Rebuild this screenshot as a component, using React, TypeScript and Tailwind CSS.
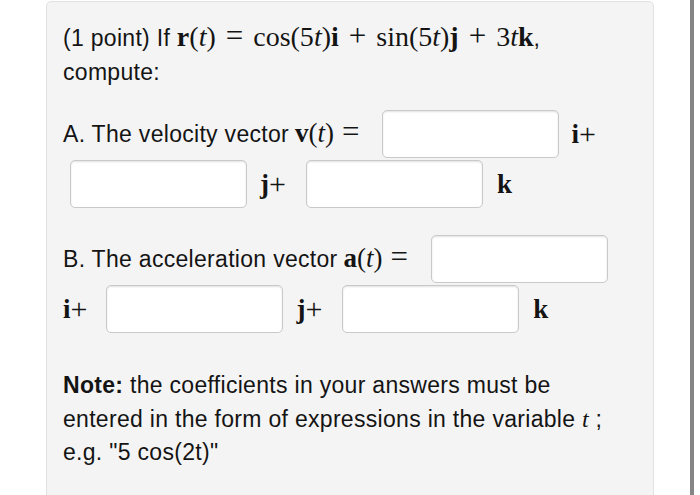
import React from "react";

const serif = "font-['Liberation_Serif',serif] tracking-normal";

type Kids = { children: React.ReactNode };

function M({ children, size = "text-[27px]" }: Kids & { size?: string }) {
  return <span className={`${serif} ${size} leading-none`}>{children}</span>;
}
const B = ({ children }: Kids) => <b className="font-bold">{children}</b>;
const I = ({ children }: Kids) => <i className="italic">{children}</i>;
// MathJax operators are wider than the Times ones, so they get a larger size
const Op = ({ children, gap = "mx-[7px]" }: Kids & { gap?: string }) => (
  <span className={`${gap} text-[31px] leading-none`}>{children}</span>
);

function Answer({ className = "" }: { className?: string }) {
  return (
    <input
      type="text"
      className={`h-[48px] w-[177px] shrink-0 rounded-[5px] border border-[#c9c9c9] bg-white shadow-[inset_0_1px_2px_rgba(0,0,0,0.12)] outline-none ${className}`}
    />
  );
}

function Unit({ v, plus = true, className = "" }: { v: string; plus?: boolean; className?: string }) {
  return (
    <span className={`${serif} flex items-center text-[27px] leading-none ${className}`}>
      <b className="font-bold">{v}</b>
      {plus && <span className="text-[30px]">+</span>}
    </span>
  );
}

export default function App() {
  return (
    <div className="flex h-[495px] w-[700px] overflow-hidden bg-white font-['Liberation_Sans',Arial,sans-serif] text-[23px] tracking-[0.3px] text-[#141414]">
      <div className="ml-[46px] mt-px min-h-[520px] w-[608px] shrink-0 rounded-t-[5px] border border-[#e1e1e1] bg-[#f4f4f4] pl-[16px] pt-[18px]">
        <p className="whitespace-nowrap leading-[34px]">
          (1 point) If{" "}
          <M size="text-[28px]">
            <B>r</B>(<I>t</I>)<Op gap="mx-[10px]">=</Op>cos(5<I>t</I>)<B>i</B>
            <Op gap="mx-[10px]">+</Op>sin(5<I>t</I>)<B>j</B>
            <Op gap="mx-[10px]">+</Op>3<I>t</I>
            <B>k</B>
          </M>
          ,
          <br />
          compute:
        </p>

        <div className="mt-[20px]">
          <div className="flex h-[50px] items-center whitespace-nowrap">
            <span>A. The velocity vector</span>
            <span className="ml-[6px]">
              <M>
                <B>v</B>(<I>t</I>)<Op gap="ml-[8px]">=</Op>
              </M>
            </span>
            <Answer className="ml-[22px]" />
            <Unit v="i" className="ml-[13px]" />
          </div>
          <div className="flex h-[50px] items-center whitespace-nowrap">
            <Answer className="ml-[7px]" />
            <Unit v="j" className="ml-[13px]" />
            <Answer className="ml-[20px]" />
            <Unit v="k" plus={false} className="ml-[14px]" />
          </div>
        </div>

        <div className="mt-[25px]">
          <div className="flex h-[50px] items-center whitespace-nowrap">
            <span>B. The acceleration vector</span>
            <span className="ml-[6px]">
              <M>
                <B>a</B>(<I>t</I>)<Op gap="ml-[8px]">=</Op>
              </M>
            </span>
            <Answer className="ml-[23px]" />
          </div>
          <div className="flex h-[50px] items-center whitespace-nowrap">
            <Unit v="i" />
            <Answer className="ml-[19px]" />
            <Unit v="j" className="ml-[13px]" />
            <Answer className="ml-[20px]" />
            <Unit v="k" plus={false} className="ml-[14px]" />
          </div>
        </div>

        <p className="mt-[35px] whitespace-nowrap leading-[33.5px]">
          <b>Note:</b> the coefficients in your answers must be
          <br />
          entered in the form of expressions in the variable{" "}
          <span className={`${serif} text-[24px] italic`}>t</span> ;
          <br />
          e.g. "5 cos(2t)"
        </p>
      </div>
      <div className="ml-[36px] h-full w-[4px] shrink-0 bg-[#858585]" />
    </div>
  );
}
